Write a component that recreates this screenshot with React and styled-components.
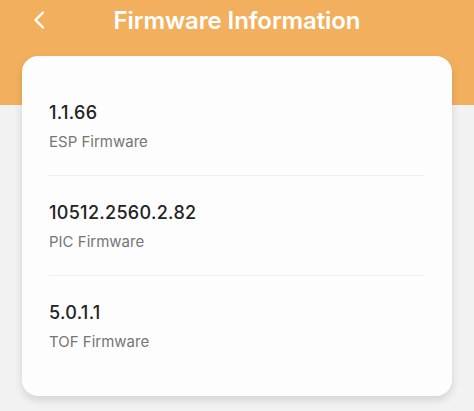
import styled, { createGlobalStyle } from 'styled-components';

const GlobalStyle = createGlobalStyle`
  html, body {
    margin: 0;
    padding: 0;
    background: #f2f2f2;
    font-family: 'Inter', 'Roboto', sans-serif;
  }
`;

const Page = styled.div`
  width: 474px;
  height: 411px;
  overflow: hidden;
  background: #f2f2f2;
`;

const Header = styled.div`
  height: 105px;
  background: #f2b05e;
`;

const TopBar = styled.div`
  height: 40px;
  display: flex;
  align-items: center;
  justify-content: center;
  position: relative;
`;

const BackButton = styled.button`
  position: absolute;
  left: 28px;
  top: 8px;
  width: 22px;
  height: 24px;
  padding: 0;
  border: none;
  background: none;
  display: flex;
  align-items: center;
  justify-content: center;
`;

const Title = styled.h1`
  margin: 0;
  color: #ffffff;
  font-size: 24px;
  font-weight: 600;
  letter-spacing: -0.1px;
`;

const Body = styled.div`
  margin-top: -49px;
  padding: 0 22px;
`;

const Card = styled.div`
  background: #fdfdfd;
  border-radius: 16px;
  box-shadow: 0 4px 8px rgba(0, 0, 0, 0.13);
  padding: 20px 28px 20px 27px;
  height: 340px;
  box-sizing: border-box;
`;

const Row = styled.div`
  height: 100px;
  box-sizing: border-box;
  padding-top: 27px;
  border-bottom: ${(p) => (p.last ? 'none' : '1px solid #efefef')};
`;

const Value = styled.div`
  font-size: 18px;
  font-weight: 500;
  letter-spacing: 0.3px;
  color: #232323;
  line-height: 20px;
`;

const Label = styled.div`
  margin-top: 10px;
  font-size: 15px;
  color: #767676;
  line-height: 18px;
`;

const items = [
  { value: '1.1.66', label: 'ESP Firmware' },
  { value: '10512.2560.2.82', label: 'PIC Firmware' },
  { value: '5.0.1.1', label: 'TOF Firmware' },
];

export default function App() {
  return (
    <Page>
      <GlobalStyle />
      <Header>
        <TopBar>
          <BackButton aria-label="Back">
            <svg width="14" height="20" viewBox="0 0 14 20" fill="none">
              <path d="M11 2.5 L3.5 10 L11 17.5" stroke="#fff" strokeWidth="2.4" strokeLinecap="round" strokeLinejoin="round" />
            </svg>
          </BackButton>
          <Title>Firmware Information</Title>
        </TopBar>
      </Header>
      <Body>
        <Card>
          {items.map((it, i) => (
            <Row key={it.label} last={i === items.length - 1}>
              <Value>{it.value}</Value>
              <Label>{it.label}</Label>
            </Row>
          ))}
        </Card>
      </Body>
    </Page>
  );
}
